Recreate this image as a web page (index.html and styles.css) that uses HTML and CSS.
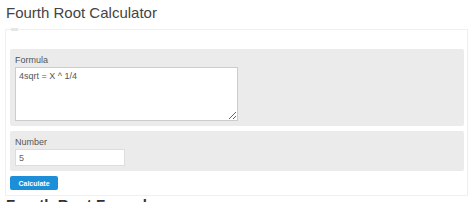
FILE: index.html
```html
<!DOCTYPE html>
<html lang="en">
<head>
    <meta charset="UTF-8">
    <title>Fourth Root Calculator</title>
    <link rel="stylesheet" href="styles.css">
</head>
<body>
    <h1 class="title">Fourth Root Calculator</h1>
    <div class="calc">
        <span class="legend"></span>
        <div class="field field-formula">
            <label class="label">Formula</label>
            <textarea class="formula" readonly>4sqrt = X ^ 1/4</textarea>
        </div>
        <div class="field">
            <label class="label">Number</label>
            <input class="num" type="text" value="5">
        </div>
        <button class="btn">Calculate</button>
    </div>
    <h2 class="sub">Fourth Root Formula</h2>
</body>
</html>
```

FILE: styles.css
```css
*{margin:0;padding:0;box-sizing:border-box;}
body{
    font-family: "Liberation Sans", Arial, sans-serif;
    color: #555;
    background: #fff;
    padding: 4px 0 0 6px;
}
.title{
    font-size: 15px;
    font-weight: normal;
    color: #444;
    line-height: 17px;
    height: 25px;
}
.calc{
    position: relative;
    margin-left: -1px;
    width: 463px;
    height: 167px;
    border: 1px solid #f0f0f0;
    padding: 19px 3px 0 4px;
}
/* 空 legend */
.legend{
    position: absolute;
    left: 5px;
    top: -2px;
    width: 7px;
    height: 3px;
    background: #e6e6e6;
}
.field{
    background: #ebebeb;
    border-radius: 2px;
    padding: 5px 5px 5px 5px;
    margin-bottom: 5px;
    height: 40px;
}
.field-formula{
    height: 77px;
}
.label{
    display: block;
    font-size: 9px;
    line-height: 12px;
    color: #555;
    margin-bottom: 1px;
}
.formula{
    display: block;
    width: 223px;
    height: 54px;
    border: 1px solid #ccc;
    background: #fff;
    font-family: "Liberation Sans", Arial, sans-serif;
    font-size: 9px;
    color: #555;
    padding: 3px;
    resize: vertical;
}
.num{
    display: block;
    width: 110px;
    height: 17px;
    border: 1px solid #ddd;
    background: #fff;
    font-family: "Liberation Sans", Arial, sans-serif;
    font-size: 9px;
    color: #666;
    padding: 0 3px;
}
.btn{
    display: block;
    width: 48px;
    height: 14px;
    border: none;
    border-radius: 2px;
    background: #1d8fd9;
    color: #fff;
    font-family: "Liberation Sans", Arial, sans-serif;
    font-size: 7px;
    font-weight: bold;
}
.sub{
    font-size: 15px;
    font-weight: bold;
    color: #333;
    margin-top: 0px;
    line-height: 17px;
}
```
